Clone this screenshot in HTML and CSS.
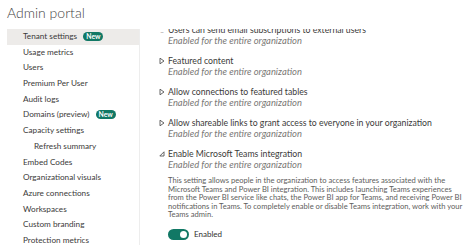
FILE: index.html
```html
<!DOCTYPE html>
<html>
<head>
<link rel="stylesheet" href="styles.css">
</head>
<body>
    <div class="portal">
        <div class="sidebar">
            <h1>Admin portal</h1>
            <ul class="nav">
                <li class="active">Tenant settings <span class="badge">New</span></li>
                <li>Usage metrics</li>
                <li>Users</li>
                <li>Premium Per User</li>
                <li>Audit logs</li>
                <li>Domains (preview) <span class="badge">New</span></li>
                <li>Capacity settings</li>
                <li class="sub">Refresh summary</li>
                <li>Embed Codes</li>
                <li>Organizational visuals</li>
                <li>Azure connections</li>
                <li>Workspaces</li>
                <li>Custom branding</li>
                <li>Protection metrics</li>
            </ul>
        </div>
        <div class="main">
            <div class="settings">
                <div class="setting">
                    <div class="title"><span class="arrow dash">&ndash;</span>Users can send email subscriptions to external users</div>
                    <div class="state">Enabled for the entire organization</div>
                </div>
                <div class="setting">
                    <div class="title"><svg class="arrow" viewBox="0 0 8 8"><path d="M2 1.2 L6 4 L2 6.8 Z" fill="none" stroke="#555" stroke-width="0.9" stroke-linejoin="round"/></svg>Featured content</div>
                    <div class="state">Enabled for the entire organization</div>
                </div>
                <div class="setting">
                    <div class="title"><svg class="arrow" viewBox="0 0 8 8"><path d="M2 1.2 L6 4 L2 6.8 Z" fill="none" stroke="#555" stroke-width="0.9" stroke-linejoin="round"/></svg>Allow connections to featured tables</div>
                    <div class="state">Enabled for the entire organization</div>
                </div>
                <div class="setting">
                    <div class="title"><svg class="arrow" viewBox="0 0 8 8"><path d="M2 1.2 L6 4 L2 6.8 Z" fill="none" stroke="#555" stroke-width="0.9" stroke-linejoin="round"/></svg>Allow shareable links to grant access to everyone in your organization</div>
                    <div class="state">Enabled for the entire organization</div>
                </div>
                <div class="setting open">
                    <div class="title"><svg class="arrow" viewBox="0 0 8 8"><path d="M6 1.8 L6 6 L1.8 6 Z" fill="none" stroke="#555" stroke-width="0.9" stroke-linejoin="round"/></svg>Enable Microsoft Teams integration</div>
                    <div class="state">Enabled for the entire organization</div>
                    <p class="desc">This setting allows people in the organization to access features associated with the Microsoft Teams and Power BI integration. This includes launching Teams experiences from the Power BI service like chats, the Power BI app for Teams, and receiving Power BI notifications in Teams. To completely enable or disable Teams integration, work with your Teams admin.</p>
                    <div class="toggle-row">
                        <span class="toggle"><span class="knob"></span></span>
                        <span class="toggle-label">Enabled</span>
                    </div>
                </div>
            </div>
        </div>
    </div>
</body>
</html>
```

FILE: styles.css
```css
body {
    margin: 0;
    background-color: #fff;
    font-family: Lato, "Liberation Sans", sans-serif;
    color: #252423;
    overflow: hidden;
}
.portal {
    display: flex;
    height: 245px;
}
.sidebar {
    width: 140px;
    flex-shrink: 0;
}
.sidebar h1 {
    margin: 0;
    padding: 4px 0 0 7px;
    height: 25px;
    box-sizing: border-box;
    font-size: 14px;
    font-weight: 300;
    color: #444;
}
.nav {
    list-style: none;
    margin: 4px 0 0 7px;
    padding: 0;
    border-right: 1px solid #ededed;
}
.nav li {
    height: 15.7px;
    line-height: 15.7px;
    padding-left: 16px;
    font-size: 8.2px;
    color: #3b3a39;
    white-space: nowrap;
}
.nav li.active {
    background-color: #edebe9;
}
.nav li.sub {
    padding-left: 27px;
}
.badge {
    display: inline-block;
    margin-left: 4px;
    padding: 0 3px;
    height: 9px;
    line-height: 9px;
    border-radius: 5px;
    background-color: #117865;
    color: #fff;
    font-size: 6.8px;
    font-weight: 700;
    vertical-align: 0.5px;
}
.main {
    flex: 1;
    overflow: hidden;
    margin-top: 29px;
}
.settings {
    margin-top: -5px;
    padding-left: 18px;
}
.setting {
    margin-bottom: 9px;
}
.title {
    display: flex;
    align-items: center;
    font-size: 8.7px;
    line-height: 12px;
    color: #3b3a39;
    white-space: nowrap;
}
.arrow {
    width: 8px;
    height: 8px;
    margin-right: 2px;
    flex-shrink: 0;
}
.dash {
    font-size: 7px;
    color: #999;
    text-align: center;
}
.state {
    padding-left: 10px;
    font-size: 9.4px;
    line-height: 10px;
    font-style: italic;
    color: #7a7876;
}
.desc {
    margin: 6px 0 0 10px;
    width: 298px;
    font-size: 7.6px;
    line-height: 8.6px;
    color: #605e5c;
}
.toggle-row {
    display: flex;
    align-items: center;
    margin: 10px 0 0 10px;
}
.toggle {
    position: relative;
    width: 21px;
    height: 11px;
    border-radius: 6px;
    background-color: #117865;
}
.knob {
    position: absolute;
    right: 2px;
    top: 2px;
    width: 7px;
    height: 7px;
    border-radius: 50%;
    background-color: #fff;
}
.toggle-label {
    margin-left: 5px;
    font-size: 8px;
    color: #323130;
}
```
